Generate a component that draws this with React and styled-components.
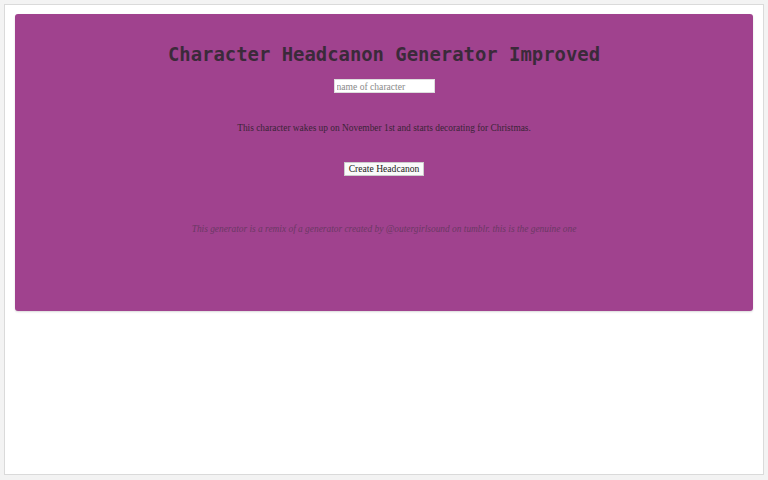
import React, { useState } from "react";
import styled, { createGlobalStyle } from "styled-components";

const headcanons = [
  "This character wakes up on November 1st and starts decorating for Christmas.",
];

const GlobalStyle = createGlobalStyle`
  html, body {
    margin: 0;
    padding: 0;
    background: #f3f3f3;
  }
  body {
    padding: 4px 4px 5px 4px;
    font-family: "Liberation Serif", "Times New Roman", serif;
  }
`;

const Frame = styled.div`
  box-sizing: border-box;
  height: 471px;
  background: #fff;
  border: 1px solid #dadada;
  padding: 9px 10px;
`;

const Panel = styled.main`
  box-sizing: border-box;
  height: 297px;
  background: #a0428e;
  border-radius: 3px;
  box-shadow: 0 1px 2px rgba(0, 0, 0, 0.15);
  padding-top: 28px;
  text-align: center;
  color: #3b2838;
`;

const Title = styled.h1`
  margin: 0;
  font-family: "DejaVu Sans Mono", "Liberation Mono", monospace;
  font-size: 18.9px;
  font-weight: bold;
  line-height: 24px;
  color: #3b2a3a;
`;

const NameInput = styled.input`
  box-sizing: border-box;
  display: block;
  margin: 13px auto 0;
  width: 101px;
  height: 14px;
  padding: 0 2px;
  border: 1px solid #ddd;
  background: #fff;
  font-family: "Liberation Serif", serif;
  font-size: 9.6px;
  color: #333;

  &::placeholder {
    color: #8a8a8a;
  }
`;

const Result = styled.p`
  margin: 29px 0 0;
  font-size: 9.4px;
  line-height: 12px;
  color: #3a2437;
`;

const CreateButton = styled.button`
  margin-top: 28px;
  height: 14px;
  padding: 0 4px;
  border: 1px solid #ccc;
  background: #fafafa;
  font-family: "Liberation Serif", serif;
  font-size: 9.6px;
  line-height: 12px;
  color: #222;
  cursor: pointer;
`;

const Credit = styled.p`
  margin: 47px 0 0;
  font-size: 9.4px;
  font-style: italic;
  line-height: 12px;
  color: #6b3864;
`;

export default function App() {
  const [name, setName] = useState("");
  const [index, setIndex] = useState(0);

  const text = headcanons[index].replace(
    "This character",
    name.trim() ? name.trim() : "This character"
  );

  return (
    <>
      <GlobalStyle />
      <Frame>
        <Panel>
          <Title>Character Headcanon Generator Improved</Title>
          <NameInput
            type="text"
            placeholder="name of character"
            value={name}
            onChange={(e) => setName(e.target.value)}
          />
          <Result>{text}</Result>
          <CreateButton
            onClick={() => setIndex((index + 1) % headcanons.length)}
          >
            Create Headcanon
          </CreateButton>
          <Credit>
            This generator is a remix of a generator created by @outergirlsound
            on tumblr. this is the genuine one
          </Credit>
        </Panel>
      </Frame>
    </>
  );
}
